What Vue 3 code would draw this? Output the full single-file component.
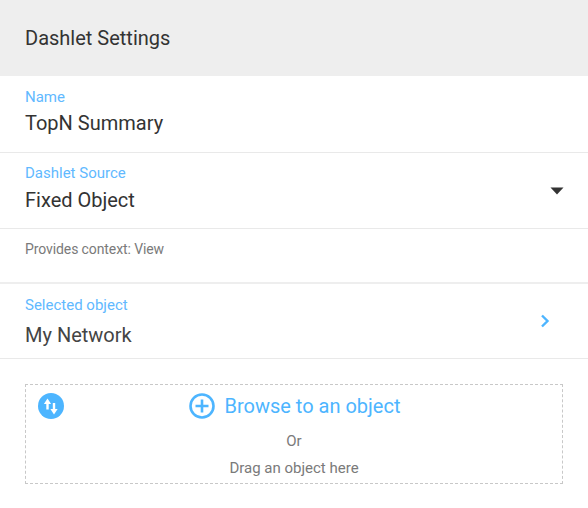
<script setup>
</script>

<template>
  <div class="panel">
    <header class="head">Dashlet Settings</header>
    <section class="field name-field">
      <label class="lbl">Name</label>
      <div class="val">TopN Summary</div>
    </section>
    <section class="field source-field">
      <div>
        <label class="lbl">Dashlet Source</label>
        <div class="val src">Fixed Object</div>
      </div>
      <svg class="caret" width="14" height="8" viewBox="0 0 14 8"><path d="M0.5 0.5H13.5L7 7.5Z" fill="#333"/></svg>
    </section>
    <section class="context">Provides context: View</section>
    <section class="field object-field">
      <div>
        <label class="lbl">Selected object</label>
        <div class="val obj">My Network</div>
      </div>
      <svg class="chev" width="10" height="14" viewBox="0 0 10 14"><path d="M2 1.5L7.5 7L2 12.5" fill="none" stroke="#4db5ff" stroke-width="2.4"/></svg>
    </section>
    <section class="drop">
      <svg class="swap" width="26" height="26" viewBox="0 0 26 26">
        <circle cx="13" cy="13" r="13" fill="#4db5ff"/>
        <path d="M9.5 16.5V10" stroke="#fff" stroke-width="2.4" fill="none"/>
        <path d="M5.9 11H13.1L9.5 5.6Z" fill="#fff"/>
        <path d="M16 10V17" stroke="#fff" stroke-width="2.4" fill="none"/>
        <path d="M12.4 16H19.6L16 21.4Z" fill="#fff"/>
      </svg>
      <div class="browse">
        <svg width="26" height="26" viewBox="0 0 26 26"><circle cx="13" cy="13" r="11.5" fill="none" stroke="#4db5ff" stroke-width="2.6"/><path d="M13 6.5V19.5M6.5 13H19.5" stroke="#4db5ff" stroke-width="2.6"/></svg>
        <span>Browse to an object</span>
      </div>
      <div class="or">Or</div>
      <div class="drag">Drag an object here</div>
    </section>
  </div>
</template>

<style>
html, body { margin: 0; background: #fff; }
</style>

<style scoped>
.panel { width: 588px; height: 508px; font-family: Roboto, sans-serif; background: #fff; overflow: hidden; }
.head { height: 76px; box-sizing: border-box; background: #eee; padding: 0 25px; display: flex; align-items: center; font-size: 20px; color: #333; }
.field { padding: 0 25px; box-sizing: border-box; border-bottom: 1px solid #e9e9e9; }
.name-field { height: 77px; padding-top: 12px; }
.source-field { height: 76px; padding: 11px 24px 0 25px; display: flex; justify-content: space-between; }
.lbl { display: block; font-size: 15px; line-height: 18px; color: #61b9ff; }
.val { font-size: 20px; line-height: 24px; margin-top: 5px; color: #333; }
.src { margin-top: 6px; }
.obj { margin-top: 9px; color: #444; }
.caret { margin-top: 23px; }
.context { height: 55px; box-sizing: border-box; padding: 12px 25px 0; font-size: 14px; line-height: 17px; letter-spacing: -0.1px; color: #7a7a7a; border-bottom: 2px solid #eee; }
.object-field { height: 75px; padding: 12px 38px 0 25px; display: flex; justify-content: space-between; }
.chev { margin-top: 18px; }
.drop { position: relative; box-sizing: border-box; width: 538px; height: 100px; margin: 25px 0 0 25px; border: 1px dashed #c8c8c8; display: flex; flex-direction: column; align-items: center; }
.swap { position: absolute; left: 12px; top: 8px; }
.browse { display: flex; align-items: center; gap: 9px; margin: 8px 0 0 2px; height: 26px; font-size: 20px; color: #4db5ff; }
.or { font-size: 15px; line-height: 18px; color: #7a7a7a; margin-top: 13px; }
.drag { font-size: 15px; line-height: 18px; color: #7a7a7a; margin-top: 9px; }
</style>
